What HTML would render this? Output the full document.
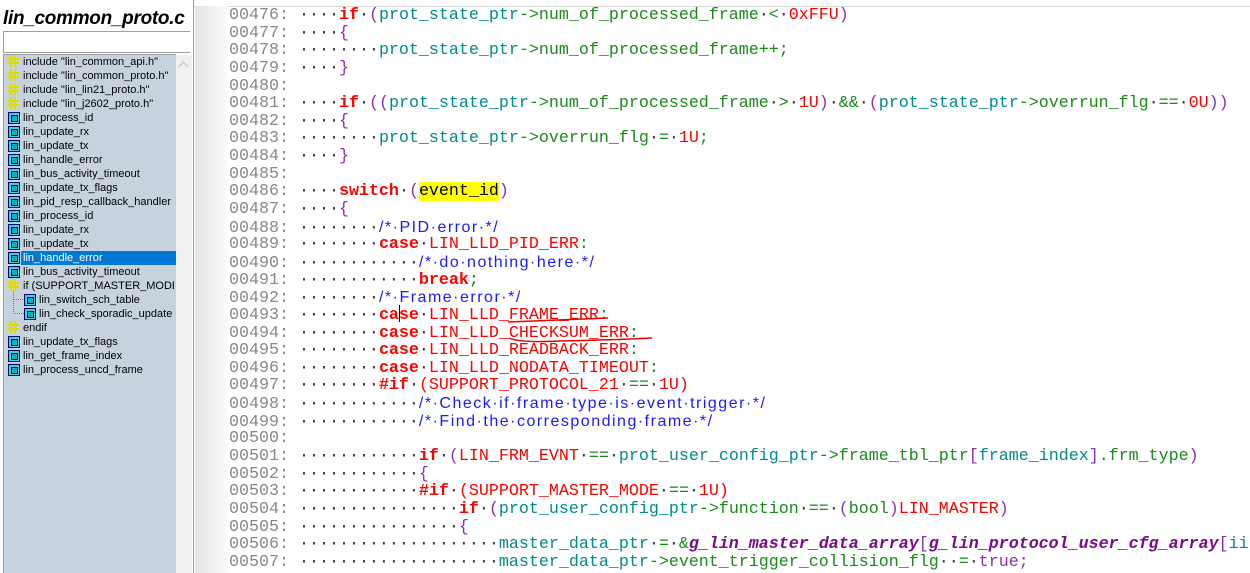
<!DOCTYPE html>
<html><head><meta charset="utf-8"><style>
html,body{margin:0;width:1250px;height:573px;overflow:hidden;background:#fff;position:relative;font-family:"Liberation Sans",sans-serif}
#left{position:absolute;left:0;top:0;width:193px;height:573px;background:#fff;border-right:1px solid #a0a0a0}
#title{position:absolute;left:3px;top:8px;font:italic bold 19px "Liberation Sans",sans-serif;color:#000;letter-spacing:-0.3px}
#inp{position:absolute;left:3px;top:31px;width:186px;height:20px;border:1px solid #a0a0a0;border-right:none;background:#fff}
#list{position:absolute;left:3px;top:54px;width:172px;height:519px;background:#c6d2de;border-top:1px solid #a0a0a0;border-left:1px solid #a0a0a0}
#sb{position:absolute;left:176px;top:55px;width:16px;height:518px;background:#f0f0f0}
#sb:before{content:"";position:absolute;left:4px;top:8px;width:6px;height:6px;border-left:1.5px solid #bbb;border-top:1.5px solid #bbb;transform:rotate(45deg)}
.it{position:absolute;height:14px;font-size:11px;line-height:14px;color:#000;white-space:nowrap}
.ic{position:absolute;left:-15px;top:1px;width:10px;height:10px;background:#2cd5e8;border:1px solid #006;}
.ic:after{content:"";position:absolute;left:2px;top:2px;width:5px;height:5px;border:1px solid #006;background:#1ab}
.hs{position:absolute;left:-16px;top:0px;width:12px;height:12px}
.hs:before{content:"";position:absolute;left:0;top:3px;width:12px;height:6px;border-top:2px solid #dd0;border-bottom:2px solid #dd0;box-sizing:border-box}
.hs:after{content:"";position:absolute;left:3px;top:0;width:6px;height:12px;border-left:2px solid #dd0;border-right:2px solid #dd0;box-sizing:border-box}
.sel{background:#0078d7;color:#fff;padding-right:4px;margin-left:-2px;padding-left:2px}
#gut{position:absolute;left:195px;top:6px;width:33px;height:567px;background:linear-gradient(90deg,#e4e4e4,#fbfbfb)}
#tb{position:absolute;left:0;top:0;width:1250px;height:6px;background:#fff;border-bottom:1px solid #d8d8d8}
#code{position:absolute;left:229px;top:7px;font-family:"Liberation Mono",monospace;font-size:16.67px;color:#000}
.l{height:17.65px;line-height:17.65px;white-space:pre}
.ln{color:#888}
.d{color:#333}
.k{color:#f00;font-weight:bold}
.r{color:#f00}
.t{color:#008b8b}
.g{color:#1a8a1a}
.p{color:#8b2fb0}
.c{color:#1a1aff;font-family:"Liberation Sans",sans-serif;font-size:16px;letter-spacing:1.5px}
.v{color:#7a0a8a;font-weight:bold;font-style:italic}
.hl{background:#ffff00;color:#000}
</style></head><body>
<div id="tb"></div>
<div id="left">
<div id="title">lin_common_proto.c</div>
<div id="inp"></div>
<div id="list"></div>
<div id="sb"></div>
</div>
<div style="position:absolute;left:0;top:0">
<div class="it" style="left:23px;top:55px"><span class="hs"></span>include "lin_common_api.h"</div>
<div class="it" style="left:23px;top:69px"><span class="hs"></span>include "lin_common_proto.h"</div>
<div class="it" style="left:23px;top:83px"><span class="hs"></span>include "lin_lin21_proto.h"</div>
<div class="it" style="left:23px;top:97px"><span class="hs"></span>include "lin_j2602_proto.h"</div>
<div class="it" style="left:23px;top:111px"><span class="ic"></span>lin_process_id</div>
<div class="it" style="left:23px;top:125px"><span class="ic"></span>lin_update_rx</div>
<div class="it" style="left:23px;top:139px"><span class="ic"></span>lin_update_tx</div>
<div class="it" style="left:23px;top:153px"><span class="ic"></span>lin_handle_error</div>
<div class="it" style="left:23px;top:167px"><span class="ic"></span>lin_bus_activity_timeout</div>
<div class="it" style="left:23px;top:181px"><span class="ic"></span>lin_update_tx_flags</div>
<div class="it" style="left:23px;top:195px"><span class="ic"></span>lin_pid_resp_callback_handler</div>
<div class="it" style="left:23px;top:209px"><span class="ic"></span>lin_process_id</div>
<div class="it" style="left:23px;top:223px"><span class="ic"></span>lin_update_rx</div>
<div class="it" style="left:23px;top:237px"><span class="ic"></span>lin_update_tx</div>
<div class="it" style="left:23px;top:251px;"><span class="ic"></span><span class="sel" style="display:inline-block;width:149px">lin_handle_error</span></div>
<div class="it" style="left:23px;top:265px"><span class="ic"></span>lin_bus_activity_timeout</div>
<div class="it" style="left:23px;top:279px;width:151px;overflow:visible"><span class="hs"></span><span style="display:inline-block;width:151px;overflow:hidden;vertical-align:top">if (SUPPORT_MASTER_MODE == 1U)</span></div>
<div style="position:absolute;left:13px;top:291px;width:10px;height:22px;border-left:1px dotted #777;border-bottom:1px dotted #777"></div>
<div style="position:absolute;left:13px;top:299px;width:10px;border-top:1px dotted #777"></div>
<div class="it" style="left:39px;top:293px"><span class="ic"></span>lin_switch_sch_table</div>
<div class="it" style="left:39px;top:307px"><span class="ic"></span>lin_check_sporadic_update</div>
<div class="it" style="left:23px;top:321px"><span class="hs"></span>endif</div>
<div class="it" style="left:23px;top:335px"><span class="ic"></span>lin_update_tx_flags</div>
<div class="it" style="left:23px;top:349px"><span class="ic"></span>lin_get_frame_index</div>
<div class="it" style="left:23px;top:363px"><span class="ic"></span>lin_process_uncd_frame</div>
</div>
<div id="gut"></div>
<div id="code"><div class="l"><span class="ln">00476: </span><span class="d">····</span><span class="k">if</span><span class="d">·</span><span class="p">(</span><span class="t">prot_state_ptr</span><span class="g">-&gt;num_of_processed_frame</span><span class="d">·</span><span class="g">&lt;</span><span class="d">·</span><span class="r">0xFFU</span><span class="p">)</span></div><div class="l"><span class="ln">00477: </span><span class="d">····</span><span class="p">{</span></div><div class="l"><span class="ln">00478: </span><span class="d">········</span><span class="t">prot_state_ptr</span><span class="g">-&gt;num_of_processed_frame++;</span></div><div class="l"><span class="ln">00479: </span><span class="d">····</span><span class="p">}</span></div><div class="l"><span class="ln">00480: </span></div><div class="l"><span class="ln">00481: </span><span class="d">····</span><span class="k">if</span><span class="d">·</span><span class="p">((</span><span class="t">prot_state_ptr</span><span class="g">-&gt;num_of_processed_frame</span><span class="d">·</span><span class="g">&gt;</span><span class="d">·</span><span class="r">1U</span><span class="p">)</span><span class="d">·</span><span class="g">&amp;&amp;</span><span class="d">·</span><span class="p">(</span><span class="t">prot_state_ptr</span><span class="g">-&gt;overrun_flg</span><span class="d">·</span><span class="g">==</span><span class="d">·</span><span class="r">0U</span><span class="p">))</span></div><div class="l"><span class="ln">00482: </span><span class="d">····</span><span class="p">{</span></div><div class="l"><span class="ln">00483: </span><span class="d">········</span><span class="t">prot_state_ptr</span><span class="g">-&gt;overrun_flg</span><span class="d">·</span><span class="g">=</span><span class="d">·</span><span class="r">1U</span><span class="g">;</span></div><div class="l"><span class="ln">00484: </span><span class="d">····</span><span class="p">}</span></div><div class="l"><span class="ln">00485: </span></div><div class="l"><span class="ln">00486: </span><span class="d">····</span><span class="k">switch</span><span class="d">·</span><span class="p">(</span><span class="hl">event_id</span><span class="p">)</span></div><div class="l"><span class="ln">00487: </span><span class="d">····</span><span class="p">{</span></div><div class="l"><span class="ln">00488: </span><span class="d">········</span><span class="c">/*·PID·error·*/</span></div><div class="l"><span class="ln">00489: </span><span class="d">········</span><span class="k">case</span><span class="d">·</span><span class="r">LIN_LLD_PID_ERR</span><span class="g">:</span></div><div class="l"><span class="ln">00490: </span><span class="d">············</span><span class="c">/*·do·nothing·here·*/</span></div><div class="l"><span class="ln">00491: </span><span class="d">············</span><span class="k">break</span><span class="g">;</span></div><div class="l"><span class="ln">00492: </span><span class="d">········</span><span class="c">/*·Frame·error·*/</span></div><div class="l"><span class="ln">00493: </span><span class="d">········</span><span class="k">case</span><span class="d">·</span><span class="r">LIN_LLD_FRAME_ERR</span><span class="g">:</span></div><div class="l"><span class="ln">00494: </span><span class="d">········</span><span class="k">case</span><span class="d">·</span><span class="r">LIN_LLD_CHECKSUM_ERR</span><span class="g">:</span></div><div class="l"><span class="ln">00495: </span><span class="d">········</span><span class="k">case</span><span class="d">·</span><span class="r">LIN_LLD_READBACK_ERR</span><span class="g">:</span></div><div class="l"><span class="ln">00496: </span><span class="d">········</span><span class="k">case</span><span class="d">·</span><span class="r">LIN_LLD_NODATA_TIMEOUT</span><span class="g">:</span></div><div class="l"><span class="ln">00497: </span><span class="d">········</span><span class="k">#if</span><span class="d">·</span><span class="r">(SUPPORT_PROTOCOL_21</span><span class="d">·</span><span class="g">==</span><span class="d">·</span><span class="r">1U)</span></div><div class="l"><span class="ln">00498: </span><span class="d">············</span><span class="c">/*·Check·if·frame·type·is·event·trigger·*/</span></div><div class="l"><span class="ln">00499: </span><span class="d">············</span><span class="c">/*·Find·the·corresponding·frame·*/</span></div><div class="l"><span class="ln">00500: </span></div><div class="l"><span class="ln">00501: </span><span class="d">············</span><span class="k">if</span><span class="d">·</span><span class="p">(</span><span class="r">LIN_FRM_EVNT</span><span class="d">·</span><span class="g">==</span><span class="d">·</span><span class="t">prot_user_config_ptr</span><span class="g">-&gt;frame_tbl_ptr</span><span class="p">[</span><span class="t">frame_index</span><span class="p">]</span><span class="g">.frm_type</span><span class="p">)</span></div><div class="l"><span class="ln">00502: </span><span class="d">············</span><span class="p">{</span></div><div class="l"><span class="ln">00503: </span><span class="d">············</span><span class="k">#if</span><span class="d">·</span><span class="r">(SUPPORT_MASTER_MODE</span><span class="d">·</span><span class="g">==</span><span class="d">·</span><span class="r">1U)</span></div><div class="l"><span class="ln">00504: </span><span class="d">················</span><span class="k">if</span><span class="d">·</span><span class="p">(</span><span class="t">prot_user_config_ptr</span><span class="g">-&gt;function</span><span class="d">·</span><span class="g">==</span><span class="d">·</span><span class="p">(</span><span class="g">bool</span><span class="p">)</span><span class="r">LIN_MASTER</span><span class="p">)</span></div><div class="l"><span class="ln">00505: </span><span class="d">················</span><span class="p">{</span></div><div class="l"><span class="ln">00506: </span><span class="d">····················</span><span class="t">master_data_ptr</span><span class="d">·</span><span class="g">=</span><span class="d">·</span><span class="g">&amp;</span><span class="v">g_lin_master_data_array</span><span class="p">[</span><span class="v">g_lin_protocol_user_cfg_array</span><span class="p">[</span><span class="t">ii</span></div><div class="l"><span class="ln">00507: </span><span class="d">····················</span><span class="t">master_data_ptr</span><span class="g">-&gt;event_trigger_collision_flg</span><span class="d">··</span><span class="g">=</span><span class="d">·</span><span class="p">true;</span></div></div>
<div style="position:absolute;left:399px;top:305px;width:1px;height:17px;background:#000"></div>
<svg style="position:absolute;left:0;top:0" width="1250" height="573"><path d="M508 322 Q560 320 608 318" stroke="#e00" stroke-width="1.5" fill="none"/><path d="M509 338 Q520 343 560 341 Q610 340 652 338" stroke="#e00" stroke-width="1.5" fill="none"/></svg>
</body></html>
